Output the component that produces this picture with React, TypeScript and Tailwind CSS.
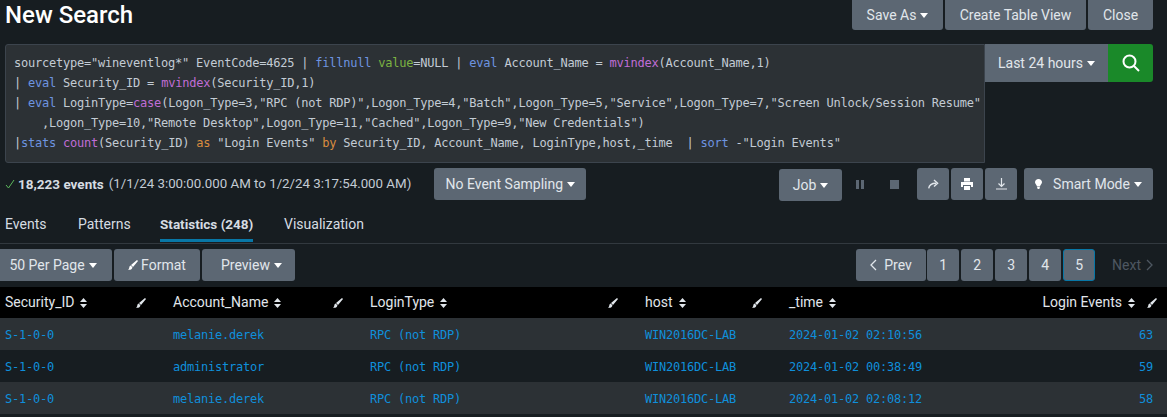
import React from 'react';

const Caret = () => (
    <svg width="8" height="5" viewBox="0 0 8 5" className="inline-block ml-[4px] align-middle">
        <path d="M0 0h8L4 5z" fill="currentColor" />
    </svg>
);

const Sort = () => (
    <svg width="7" height="10" viewBox="0 0 7 10" className="inline-block ml-[6px]">
        <path d="M3.5 0L7 4H0zM0 6h7L3.5 10z" fill="currentColor" />
    </svg>
);

const Brush = () => (
    <svg width="10" height="10" viewBox="0 0 10 10">
        <path d="M9 0L10 1 5 7 3 5zM2.6 5.6C1.4 6 1.4 7 1.2 8 1 8.8 0.6 9.2 0 9.6 1.6 10.2 3.4 9.8 4.1 8.3 4.4 7.7 4.4 7.2 4.2 7z" fill="currentColor" />
    </svg>
);

const Btn = ({ className = '', children }: { className?: string; children: React.ReactNode }) => (
    <div className={`flex items-center justify-center bg-[#5c6773] text-[#e1e6eb] rounded-[3px] text-[14px] ${className}`}>
        {children}
    </div>
);

const Kw = ({ c, children }: { c: string; children: React.ReactNode }) => <span className={c}>{children}</span>;

const blue = 'text-[#6e94e0]';
const pink = 'text-[#c06dd6]';
const green = 'text-[#7cb342]';
const orange = 'text-[#d98c3f]';

const columns = [
    { name: 'Security_ID', pencil: true },
    { name: 'Account_Name', pencil: true },
    { name: 'LoginType', pencil: true },
    { name: 'host', pencil: true },
    { name: '_time', pencil: false },
];

const rows = [
    ['S-1-0-0', 'melanie.derek', 'RPC (not RDP)', 'WIN2016DC-LAB', '2024-01-02 02:10:56', '63'],
    ['S-1-0-0', 'administrator', 'RPC (not RDP)', 'WIN2016DC-LAB', '2024-01-02 00:38:49', '59'],
    ['S-1-0-0', 'melanie.derek', 'RPC (not RDP)', 'WIN2016DC-LAB', '2024-01-02 02:08:12', '58'],
];

const grid = 'grid grid-cols-[168px_197px_275px_144px_150px_1fr_25px]';
const mono = "font-['DejaVu_Sans_Mono',monospace] text-[12px] tracking-[-0.22px]";

const App = () => {
    return (
        <div className="w-[1167px] h-[417px] overflow-hidden bg-[#171d21] text-[#c3cbd4] font-['Roboto',sans-serif] text-[14px]">
            <div className="flex justify-between items-start pl-[5px] pr-[14px] h-[44px]">
                <h1 className="text-[24px] leading-[30px] text-white font-medium">New Search</h1>
                <div className="flex gap-[2px]">
                    <Btn className="w-[91px] h-[30px] rounded-t-none">Save As<span className="text-white"><Caret /></span></Btn>
                    <Btn className="w-[141px] h-[30px] rounded-t-none">Create Table View</Btn>
                    <Btn className="w-[65px] h-[30px] rounded-t-none">Close</Btn>
                </div>
            </div>

            <div className="flex items-start pl-[5px] pr-[14px]">
                <div className={`w-[980px] h-[119px] bg-[#2c3135] border border-[#3c444d] rounded-l-[3px] pl-[8px] pt-[8px] leading-[20px] text-[#c3cbd4] whitespace-pre ${mono}`}>
                    <div>sourcetype="wineventlog*" EventCode=4625 | <Kw c={blue}>fillnull</Kw> <Kw c={green}>value</Kw>=NULL | <Kw c={blue}>eval</Kw> Account_Name = <Kw c={pink}>mvindex</Kw>(Account_Name,1)</div>
                    <div>| <Kw c={blue}>eval</Kw> Security_ID = <Kw c={pink}>mvindex</Kw>(Security_ID,1)</div>
                    <div>| <Kw c={blue}>eval</Kw> LoginType=<Kw c={pink}>case</Kw>(Logon_Type=3,"RPC (not RDP)",Logon_Type=4,"Batch",Logon_Type=5,"Service",Logon_Type=7,"Screen Unlock/Session Resume"</div>
                    <div>    ,Logon_Type=10,"Remote Desktop",Logon_Type=11,"Cached",Logon_Type=9,"New Credentials")</div>
                    <div>|<Kw c={blue}>stats</Kw> <Kw c={pink}>count</Kw>(Security_ID) <Kw c={orange}>as</Kw> "Login Events" <Kw c={orange}>by</Kw> Security_ID, Account_Name, LoginType,host,_time  | <Kw c={blue}>sort</Kw> -"Login Events"</div>
                </div>
                <Btn className="w-[123px] h-[38px] rounded-none">Last 24 hours<span className="text-white"><Caret /></span></Btn>
                <div className="w-[45px] h-[38px] bg-[#1a8929] rounded-r-[3px] flex items-center justify-center text-white">
                    <svg width="18" height="18" viewBox="0 0 18 18" fill="none" stroke="currentColor" strokeWidth="2">
                        <circle cx="7.5" cy="7.5" r="6" />
                        <path d="M12 12l5 5" />
                    </svg>
                </div>
            </div>

            <div className="flex items-center pl-[5px] pr-[14px] mt-[5px] h-[32px]">
                <svg width="10" height="10" viewBox="0 0 10 10" fill="none" stroke="#5cb85c" strokeWidth="1" className="mr-[3px]">
                    <path d="M1 6l2.5 3L9 1" />
                </svg>
                <span className="font-bold text-[#d6dce2] text-[13.5px]">18,223 events</span>
                <span className="ml-[5px] text-[13.3px]">(1/1/24 3:00:00.000 AM to 1/2/24 3:17:54.000 AM)</span>
                <Btn className="w-[152px] h-[32px] ml-[23px]">No Event Sampling<span className="text-white"><Caret /></span></Btn>
                <div className="flex-1" />
                <Btn className="w-[63px] h-[32px] mt-[2px]">Job<span className="text-white"><Caret /></span></Btn>
                <div className="w-[34px] flex justify-center ml-[1px]">
                    <svg width="8" height="9" viewBox="0 0 8 9" fill="#5c6773"><path d="M0 0h3v9H0zM5 0h3v9H5z" /></svg>
                </div>
                <div className="w-[34px] flex justify-center">
                    <svg width="9" height="9" viewBox="0 0 9 9" fill="#5c6773"><path d="M0 0h9v9H0z" /></svg>
                </div>
                <div className="flex gap-[2px] ml-[6px]">
                    <Btn className="w-[32px] h-[32px]">
                        <svg width="11" height="10" viewBox="0 0 11 10" fill="none" stroke="currentColor" strokeWidth="1.4">
                            <path d="M0.7 9.4C1.2 5.8 3.6 4.2 8 4.2" />
                            <path d="M6 1l3.6 3.2L6 7.4" />
                        </svg>
                    </Btn>
                    <Btn className="w-[32px] h-[32px] text-white">
                        <svg width="12" height="12" viewBox="0 0 12 12" fill="currentColor">
                            <path d="M3 0h6v3.5H3zM0 4h12v5h-2V7H2v2H0zM3 8h6v4H3z" />
                        </svg>
                    </Btn>
                    <Btn className="w-[32px] h-[32px]">
                        <svg width="11" height="12" viewBox="0 0 11 12" fill="none" stroke="currentColor" strokeWidth="1.2">
                            <path d="M5.5 0v8M2.5 5.5l3 3 3-3M0 11h11" />
                        </svg>
                    </Btn>
                </div>
                <Btn className="w-[129px] h-[32px] ml-[7px]">
                    <svg width="7" height="10" viewBox="0 0 7 10" fill="white" className="mr-[11px]">
                        <path d="M3.5 0C1.5 0 0 1.4 0 3.3 0 5 1.6 5.6 2 7.4h3C5.4 5.6 7 5 7 3.3 7 1.4 5.5 0 3.5 0zM2.2 8h2.6v1.2L4 10H3l-.8-.8z" />
                    </svg>
                    Smart Mode<span className="text-white"><Caret /></span>
                </Btn>
            </div>

            <div className="flex items-start h-[31px] border-b border-[#32393f] mt-[13px] pl-[5px] pt-[1px] text-[14px] text-[#d6dce2]">
                <span className="w-[73px]">Events</span>
                <span className="w-[82px]">Patterns</span>
                <div className="w-[124px]">
                    <div className="w-[93px] h-[28px] border-b-[3px] border-[#0877a6] font-bold whitespace-nowrap text-[13.5px]">Statistics (248)</div>
                </div>
                <span>Visualization</span>
            </div>

            <div className="flex items-center h-[32px] mt-[5px] mb-[6px] pr-[14px]">
                <Btn className="w-[112px] h-[32px] rounded-l-none pr-[6px]">50 Per Page<span className="text-white"><Caret /></span></Btn>
                <Btn className="w-[86px] h-[32px] ml-[2px]">
                    <span className="text-white mr-[3px] flex"><Brush /></span>Format
                </Btn>
                <Btn className="w-[93px] h-[32px] ml-[2px] pl-[6px]">Preview<span className="text-white"><Caret /></span></Btn>
                <div className="flex-1" />
                <Btn className="w-[70px] h-[32px]">
                    <svg width="7" height="12" viewBox="0 0 7 12" fill="none" stroke="currentColor" strokeWidth="1.3" className="mr-[7px]">
                        <path d="M6 1L1 6l5 5" />
                    </svg>
                    Prev
                </Btn>
                <div className="flex gap-[2px] ml-[1px]">
                    {['1', '2', '3', '4'].map((n) => (
                        <Btn key={n} className="w-[32px] h-[32px]">{n}</Btn>
                    ))}
                    <Btn className="w-[32px] h-[32px] border border-[#0877a6]">5</Btn>
                </div>
                <span className="ml-[17px] text-[#4e5761] flex items-center">
                    Next
                    <svg width="7" height="12" viewBox="0 0 7 12" fill="none" stroke="currentColor" strokeWidth="1.3" className="ml-[5px]">
                        <path d="M1 1l5 5-5 5" />
                    </svg>
                </span>
            </div>

            <div className={`${grid} bg-black text-[#e1e6eb] h-[31px] items-center`}>
                {columns.map((col) => (
                    <div key={col.name} className="flex items-center justify-between pl-[5px] pr-[22px]">
                        <span className="flex items-center">{col.name}<Sort /></span>
                        {col.pencil && <Brush />}
                    </div>
                ))}
                <div className="flex justify-end items-center pr-[7px]">Login Events<Sort /></div>
                <div className="pl-[5px]"><Brush /></div>
            </div>
            {rows.map((row, i) => (
                <div key={i} className={`${grid} h-[32px] pt-[1px] items-center text-[#0f8fdb] ${mono} ${i % 2 === 0 ? 'bg-[#2c3135]' : ''}`}>
                    {row.slice(0, 5).map((cell, j) => (
                        <div key={j} className="pl-[5px] whitespace-nowrap">{cell}</div>
                    ))}
                    <div className="col-span-2 text-right pr-[14px]">{row[5]}</div>
                </div>
            ))}
        </div>
    );
};

export default App;
